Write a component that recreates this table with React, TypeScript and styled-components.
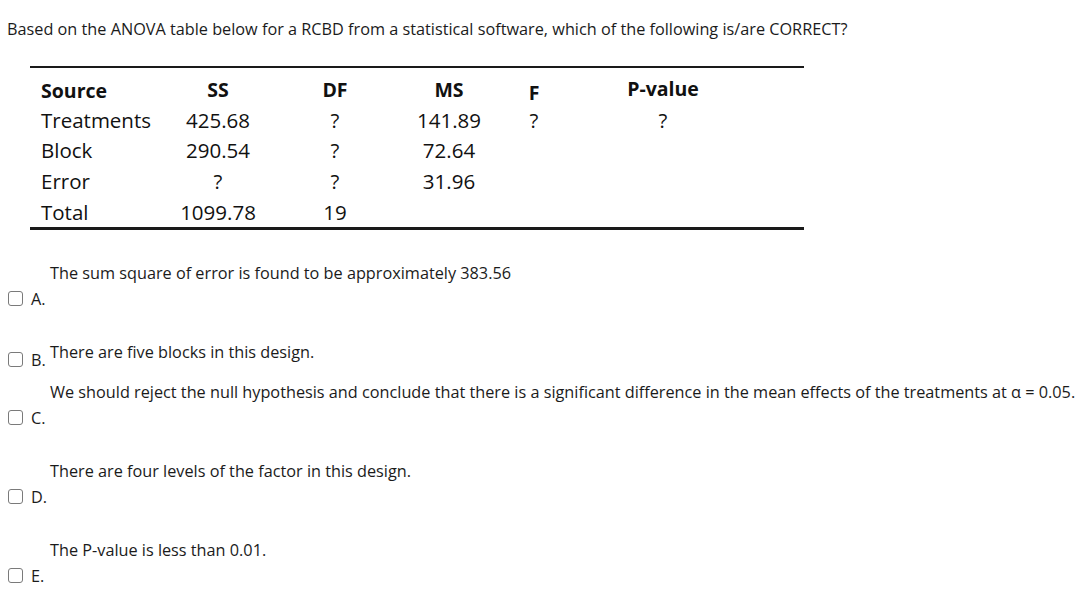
import React from 'react';
import styled, {createGlobalStyle} from 'styled-components';

const GlobalStyle = createGlobalStyle`
    body {
        margin: 0;
        background: #ffffff;
        font-family: "Open Sans", "Noto Sans", sans-serif;
        color: #1b1b1b;
    }
`;

const rows = [
    ['Treatments', '425.68', '?', '141.89', '?', '?'],
    ['Block', '290.54', '?', '72.64', '', ''],
    ['Error', '?', '?', '31.96', '', ''],
    ['Total', '1099.78', '19', '', '', ''],
];

const options = [
    {key: 'A', text: 'The sum square of error is found to be approximately 383.56', lead: 26, after: 31},
    {key: 'B', text: 'There are five blocks in this design.', lead: 8, after: 10},
    {key: 'C', text: 'We should reject the null hypothesis and conclude that there is a significant difference in the mean effects of the treatments at \u03b1 = 0.05.', lead: 26, after: 31},
    {key: 'D', text: 'There are four levels of the factor in this design.', lead: 26, after: 31},
    {key: 'E', text: 'The P-value is less than 0.01.', lead: 26, after: 0},
];

const App = () => {
    return (
        <Page>
            <GlobalStyle />
            <Question>
                Based on the ANOVA table below for a RCBD from a statistical software, which of the following is/are CORRECT?
            </Question>

            <Table>
                <Row>
                    <HeadCell align="left" nudge={2}>Source</HeadCell>
                    <HeadCell nudge={1}>SS</HeadCell>
                    <HeadCell nudge={1}>DF</HeadCell>
                    <HeadCell nudge={1}>MS</HeadCell>
                    <HeadCell nudge={4}>F</HeadCell>
                    <HeadCell nudge={0}>P-value</HeadCell>
                    <span />
                </Row>
                {rows.map((r) => (
                    <Row key={r[0]}>
                        <Cell align="left">{r[0]}</Cell>
                        <Cell>{r[1]}</Cell>
                        <Cell>{r[2]}</Cell>
                        <Cell>{r[3]}</Cell>
                        <Cell>{r[4]}</Cell>
                        <Cell>{r[5]}</Cell>
                        <span />
                    </Row>
                ))}
            </Table>

            <Options>
                {options.map((o) => (
                    <Option key={o.key} after={o.after}>
                        <Check />
                        <Letter>{o.key}.</Letter>
                        <Answer lead={o.lead}>{o.text}</Answer>
                    </Option>
                ))}
            </Options>
        </Page>
    );
};

export default App;

const Page = styled.div`
    padding: 18px 0 0 7px;
    width: 1084px;
`;

const Question = styled.div`
    font-size: 16.25px;
    line-height: 22px;
`;

const Table = styled.div`
    margin: 26px 0 0 23px;
    width: 774px;
    border-top: 2px solid #1a1a1a;
    border-bottom: 3px solid #1a1a1a;
    padding-top: 6px;
    font-family: "Open Sans", "Noto Sans", sans-serif;
    font-size: 20.5px;
    color: #111;
`;

const Row = styled.div`
    display: grid;
    grid-template-columns: 130px 116px 118px 110px 60px 198px 42px;
    height: 30.6px;
    align-items: center;
`;

const Cell = styled.div<{align?: string}>`
    text-align: ${props => props.align || 'center'};
    padding-left: ${props => props.align === 'left' ? '11px' : '0'};
    white-space: nowrap;
    line-height: 28px;
`;

const HeadCell = styled(Cell)<{nudge?: number}>`
    font-weight: 700;
    font-size: 19.5px;
    position: relative;
    top: ${props => props.nudge || 0}px;
`;

const Options = styled.div`
    margin-top: 32px;
    display: flex;
    flex-direction: column;
`;

const Option = styled.div<{after: number}>`
    display: flex;
    align-items: flex-end;
    margin-bottom: ${props => props.after}px;
    font-size: 16.25px;
    line-height: 22px;
`;

const Check = styled.span`
    width: 13px;
    height: 13px;
    border: 1px solid #7a7a7a;
    border-radius: 3px;
    margin: 0 8px 4px 1px;
    flex-shrink: 0;
`;

const Letter = styled.span`
    width: 19px;
    flex-shrink: 0;
`;

const Answer = styled.div<{lead: number}>`
    padding-bottom: ${props => props.lead}px;
    white-space: nowrap;
`;
